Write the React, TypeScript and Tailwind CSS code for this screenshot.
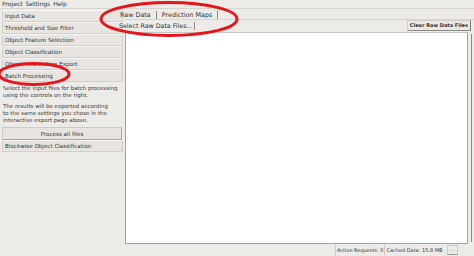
import React from "react";

const sideItems = [
    "Input Data",
    "Threshold and Size Filter",
    "Object Feature Selection",
    "Object Classification",
    "Object Information Export",
    "Batch Processing",
];

function SideButton({ label }: { label: string }) {
    return (
        <div className="h-[12px] flex items-center px-[2px] bg-[#e8e5e1] border border-[#d3cfca] border-t-[#f7f6f4] rounded-[1px] whitespace-nowrap">
            {label}
        </div>
    );
}

export default function App() {
    return (
        <div
            className="relative w-[474px] h-[256px] flex flex-col bg-[#edebe8] text-[#2e3436] text-[5.6px] leading-[8px] overflow-hidden"
            style={{ fontFamily: '"DejaVu Sans", sans-serif' }}
        >
            {/* menu bar */}
            <div className="h-[9px] flex items-end gap-[3px] px-[2px] text-[6px] border-b border-[#d8d4cf]">
                <span>Project</span>
                <span>Settings</span>
                <span>Help</span>
            </div>

            <div className="flex-1 flex min-h-0">
                {/* left applet drawer */}
                <div className="w-[123px] flex flex-col pl-[2px] pt-[1px]">
                    {sideItems.map((s) => (
                        <SideButton key={s} label={s} />
                    ))}
                    <div className="px-[1px] pt-[3px] text-[#3a3a3a] text-[5.5px] leading-[7px] whitespace-nowrap">
                        <p>Select the input files for batch processing</p>
                        <p>using the controls on the right.</p>
                        <p className="mt-[4px]">The results will be exported according</p>
                        <p>to the same settings you chose in the</p>
                        <p>interactive export page above.</p>
                    </div>
                    <div className="mt-[3px] h-[13px] flex items-center justify-center bg-[#e8e5e1] border border-[#cfcac4] border-r-[#a9a49e] border-b-[#a9a49e] mr-[1px]">
                        Process all files
                    </div>
                    <SideButton label="Blockwise Object Classification" />
                </div>

                {/* splitter */}
                <div className="w-[2px]" />

                {/* right panel */}
                <div className="flex-1 flex flex-col min-w-0">
                    <div className="h-[11px] flex items-end border-b border-[#d8d4cf] text-[6.4px]">
                        <span className="pr-[5px] -ml-[5px] border-r border-[#8c8882] leading-[8px]">Raw Data</span>
                        <span className="px-[5px] border-r border-[#8c8882] leading-[8px]">Prediction Maps</span>
                    </div>
                    <div className="h-[12px] flex items-center justify-between">
                        <span className="-ml-[7px] px-[1px] text-[6.3px] border-r border-[#8c8882]">Select Raw Data Files...</span>
                        <span className="mr-[3px] -mt-[2px] px-[2px] h-[11px] flex items-center text-[5px] font-bold text-[#333] bg-[#ebe8e4] border border-[#d3cfca] border-r-[#777] border-b-[#8a8a8a]">
                            Clear Raw Data Files
                        </span>
                    </div>
                    <div className="flex-1 flex min-h-0">
                        <div className="flex-1 bg-white border border-[#a6a29d] border-t-[#c9c5c0]" />
                        <div className="w-[6px] flex justify-center">
                            <div className="w-[1px] bg-[#8f8b86] mt-[2px] mb-[2px]" />
                        </div>
                    </div>
                    <div className="h-[12px]" />
                </div>
            </div>

            {/* status bar */}
            <div className="absolute left-[335px] top-[244px] h-[12px] flex items-center text-[5px]">
                <span className="px-[1px] h-full flex items-center border-l border-[#cfcac4]">Active Requests: 0</span>
                <span className="px-[1px] h-full flex items-center border-l border-[#cfcac4]">Cached Data: 15.8 MB</span>
                <span className="ml-[4px] w-[11px] h-[10px] flex items-end justify-center border border-[#cfcac4] border-b-[#999] text-[4px]">...</span>
            </div>

            {/* red annotations */}
            <svg className="absolute inset-0 pointer-events-none" width="474" height="256">
                <ellipse cx="169" cy="19" rx="68" ry="16.5" fill="none" stroke="#e8141c" strokeWidth="3" />
                <ellipse cx="34" cy="74" rx="35" ry="10.5" fill="none" stroke="#e8141c" strokeWidth="3" />
            </svg>
        </div>
    );
}
